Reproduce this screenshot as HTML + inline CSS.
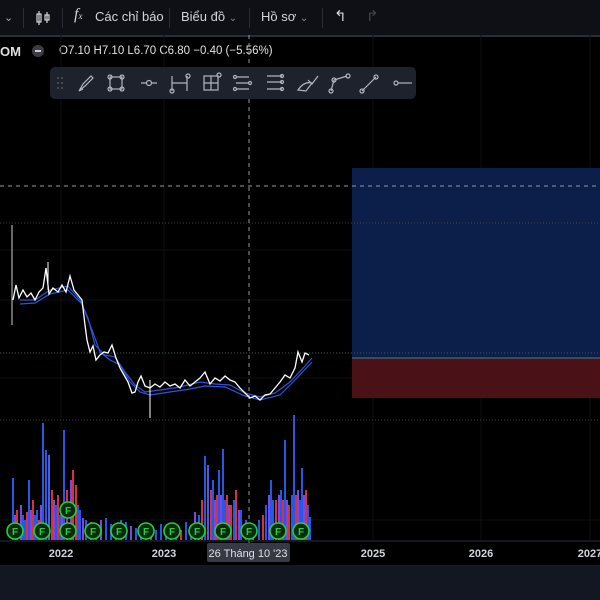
<!DOCTYPE html>
<html><head><meta charset="utf-8"><style>
body{margin:0;width:600px;height:600px;background:#000;overflow:hidden;font-family:"Liberation Sans","Noto Sans CJK SC",sans-serif;position:relative}
.top{position:absolute;left:0;top:0;width:600px;height:35px;background:#0f1016;border-bottom:2px solid #2a2e39}
.t{position:absolute;top:9px;color:#d1d4dc;font-size:13px}
.sep{position:absolute;top:8px;width:1px;height:20px;background:#2a2e39}
.bot{position:absolute;left:0;top:565px;width:600px;height:35px;background:#131722}
</style></head><body>
<div class="top">
<div class="t" style="left:4px;color:#aaa;font-size:11px;top:11px">⌄</div>
<div class="sep" style="left:23px"></div>
<svg style="position:absolute;left:34px;top:9px" width="18" height="18" viewBox="0 0 18 18" fill="none" stroke="#d1d4dc" stroke-width="1.2"><rect x="3" y="5" width="4" height="8"/><line x1="5" y1="2" x2="5" y2="16"/><rect x="11" y="6" width="4" height="5"/><line x1="13" y1="3" x2="13" y2="14"/></svg>
<div class="sep" style="left:62px"></div>
<div class="t" style="left:74px;font-style:italic;font-family:'Liberation Serif',serif;font-size:16px;top:6px">f<span style="font-size:9px">x</span></div>
<div class="t" style="left:95px">Các chỉ báo</div>
<div class="sep" style="left:169px"></div>
<div class="t" style="left:181px">Biểu đồ <span style="color:#888;font-size:10px">⌄</span></div>
<div class="sep" style="left:249px"></div>
<div class="t" style="left:261px">Hồ sơ <span style="color:#888;font-size:10px">⌄</span></div>
<div class="sep" style="left:322px"></div>
<div class="t" style="left:334px;font-size:15px;top:7px">↰</div>
<div class="t" style="left:366px;color:#444;font-size:15px;top:7px">↱</div>
</div>
<div style="position:absolute;left:0;top:44px;color:#e0e0e0;font-size:13px;font-weight:bold">OM</div>
<div style="position:absolute;left:32px;top:45px;width:12px;height:12px;border-radius:50%;background:#3a3d45"><div style="margin:5px 3px;width:6px;height:2px;background:#ccc"></div></div>
<div style="position:absolute;left:59px;top:45px;color:#e0e0e0;font-size:11.5px">O7.10 H7.10 L6.70 C6.80 −0.40 (−5.56%)</div>
<svg width="600" height="600" style="position:absolute;left:0;top:0">
<g stroke="#0e1015" stroke-width="1">
<line x1="61" y1="35" x2="61" y2="540"/><line x1="164" y1="35" x2="164" y2="540"/><line x1="373" y1="35" x2="373" y2="540"/><line x1="481" y1="35" x2="481" y2="540"/><line x1="590" y1="35" x2="590" y2="540"/>
<line x1="0" y1="250" x2="600" y2="250"/><line x1="0" y1="300" x2="600" y2="300"/><line x1="0" y1="378" x2="600" y2="378"/><line x1="0" y1="520" x2="600" y2="520"/>
</g>
<rect x="352" y="168" width="248" height="189" fill="#0c1e4a"/>
<rect x="352" y="359" width="248" height="39" fill="#4a1217"/>
<line x1="352" y1="358" x2="600" y2="358" stroke="#8a8ea0" stroke-width="1"/>
<line x1="0" y1="353" x2="600" y2="353" stroke="#1f6b4f" stroke-dasharray="1 2"/>
<line x1="0" y1="223" x2="600" y2="223" stroke="#444" stroke-dasharray="1 2"/>
<line x1="0" y1="420" x2="600" y2="420" stroke="#444" stroke-dasharray="1 2"/>
<line x1="0" y1="186" x2="600" y2="186" stroke="#9598a1" stroke-dasharray="4 4"/>
<line x1="249" y1="35" x2="249" y2="545" stroke="#9598a1" stroke-dasharray="4 4"/>
<g fill="none" stroke="#2f55d4" stroke-width="1.2">
<polyline points="20,300 35,300 50,290 68,286 80,300 88,318 95,345 105,355 115,357 125,372 135,385 145,392 160,390 180,387 200,382 215,384 230,385 245,393 260,397 275,393 290,382 305,366 312,358"/>
<polyline points="20,304 35,303 50,294 68,290 82,304 92,330 100,352 110,360 120,365 130,382 140,392 150,395 170,392 190,389 205,386 225,387 245,396 260,400 280,395 295,380 312,362"/>
</g>
<polyline fill="none" stroke="#fff" stroke-width="1.3" points="13,300 16,285 19,298 23,290 27,297 31,293 35,300 39,292 43,288 46,268 49,294 53,288 58,292 62,285 66,292 70,276 74,290 78,295 82,300 85,325 87,340 90,352 93,346 96,360 100,355 104,352 108,353 112,345 116,358 120,368 124,375 128,382 132,393 135,392 138,382 141,376 145,386 150,388 155,384 160,387 165,382 170,386 175,384 180,388 185,380 190,386 195,382 200,378 205,372 210,384 215,378 220,381 225,376 230,380 235,382 240,388 245,393 250,398 255,396 260,400 265,395 270,394 275,388 280,382 285,375 290,378 295,368 298,352 302,362 305,353 309,355"/>
<line x1="12" y1="225" x2="12" y2="325" stroke="#ccc"/>
<line x1="150" y1="380" x2="150" y2="418" stroke="#fff"/>
<line x1="48" y1="262" x2="48" y2="290" stroke="#fff"/>
<g opacity="0.9">
<rect x="12" y="478" width="2" height="62" fill="#2962ff"/><rect x="14" y="515" width="2" height="25" fill="#8a4dff"/><rect x="16" y="510" width="2" height="30" fill="#f23645"/><rect x="20" y="505" width="2" height="35" fill="#8a4dff"/><rect x="22" y="515" width="2" height="25" fill="#2962ff"/><rect x="24" y="520" width="2" height="20" fill="#2962ff"/><rect x="26" y="512" width="2" height="28" fill="#f23645"/><rect x="28" y="480" width="2" height="60" fill="#2962ff"/><rect x="30" y="510" width="2" height="30" fill="#8a4dff"/><rect x="32" y="500" width="2" height="40" fill="#f23645"/><rect x="34" y="515" width="2" height="25" fill="#2962ff"/><rect x="36" y="510" width="2" height="30" fill="#2962ff"/><rect x="38" y="520" width="2" height="20" fill="#f23645"/>
<rect x="40" y="505" width="2" height="35" fill="#8a4dff"/><rect x="42" y="423" width="2" height="117" fill="#2962ff"/><rect x="45" y="450" width="2" height="90" fill="#2962ff"/><rect x="48" y="455" width="2" height="85" fill="#4a6bff"/><rect x="51" y="490" width="2" height="50" fill="#f23645"/><rect x="53" y="500" width="2" height="40" fill="#8a4dff"/><rect x="55" y="505" width="2" height="35" fill="#2962ff"/><rect x="57" y="495" width="2" height="45" fill="#f23645"/><rect x="59" y="515" width="2" height="25" fill="#2962ff"/><rect x="61" y="505" width="2" height="35" fill="#8a4dff"/>
<rect x="63" y="430" width="2" height="110" fill="#2962ff"/><rect x="66" y="490" width="2" height="50" fill="#f23645"/><rect x="70" y="480" width="2" height="60" fill="#8a4dff"/><rect x="72" y="470" width="2" height="70" fill="#f23645"/><rect x="75" y="485" width="2" height="55" fill="#f23645"/><rect x="77" y="505" width="2" height="35" fill="#2962ff"/><rect x="79" y="510" width="2" height="30" fill="#2962ff"/><rect x="82" y="518" width="2" height="22" fill="#8a4dff"/>
<rect x="85" y="520" width="2" height="20" fill="#2962ff"/><rect x="90" y="522" width="2" height="18" fill="#f23645"/><rect x="95" y="525" width="2" height="15" fill="#2962ff"/><rect x="100" y="520" width="2" height="20" fill="#8a4dff"/><rect x="105" y="518" width="2" height="22" fill="#2962ff"/><rect x="110" y="524" width="2" height="16" fill="#2962ff"/><rect x="115" y="528" width="2" height="12" fill="#f23645"/><rect x="120" y="520" width="2" height="20" fill="#2962ff"/><rect x="125" y="522" width="2" height="18" fill="#2962ff"/><rect x="130" y="526" width="2" height="14" fill="#8a4dff"/><rect x="135" y="528" width="2" height="12" fill="#2962ff"/><rect x="140" y="524" width="2" height="16" fill="#2962ff"/><rect x="145" y="525" width="2" height="15" fill="#8a4dff"/><rect x="150" y="526" width="2" height="14" fill="#f23645"/><rect x="155" y="530" width="2" height="10" fill="#2962ff"/><rect x="160" y="524" width="2" height="16" fill="#2962ff"/><rect x="165" y="528" width="2" height="12" fill="#2962ff"/><rect x="170" y="526" width="2" height="14" fill="#8a4dff"/><rect x="175" y="528" width="2" height="12" fill="#2962ff"/><rect x="180" y="530" width="2" height="10" fill="#f23645"/><rect x="185" y="522" width="2" height="18" fill="#2962ff"/><rect x="190" y="525" width="2" height="15" fill="#2962ff"/><rect x="194" y="512" width="2" height="28" fill="#8a4dff"/><rect x="198" y="515" width="2" height="25" fill="#2962ff"/><rect x="201" y="500" width="2" height="40" fill="#f23645"/>
<rect x="204" y="456" width="2" height="84" fill="#2962ff"/><rect x="207" y="465" width="2" height="75" fill="#4a6bff"/><rect x="210" y="490" width="2" height="50" fill="#f23645"/><rect x="212" y="480" width="2" height="60" fill="#2962ff"/><rect x="214" y="500" width="2" height="40" fill="#8a4dff"/><rect x="216" y="495" width="2" height="45" fill="#f23645"/><rect x="218" y="470" width="2" height="70" fill="#2962ff"/><rect x="220" y="495" width="2" height="45" fill="#8a4dff"/><rect x="222" y="449" width="2" height="91" fill="#2962ff"/><rect x="224" y="500" width="2" height="40" fill="#2962ff"/><rect x="226" y="495" width="2" height="45" fill="#f23645"/><rect x="228" y="505" width="2" height="35" fill="#8a4dff"/><rect x="230" y="505" width="2" height="35" fill="#f23645"/><rect x="233" y="500" width="2" height="40" fill="#2962ff"/><rect x="235" y="490" width="2" height="50" fill="#f23645"/><rect x="238" y="510" width="2" height="30" fill="#8a4dff"/><rect x="240" y="510" width="2" height="30" fill="#2962ff"/><rect x="245" y="520" width="2" height="20" fill="#2962ff"/><rect x="252" y="524" width="2" height="16" fill="#8a4dff"/><rect x="258" y="520" width="2" height="20" fill="#2962ff"/><rect x="262" y="515" width="2" height="25" fill="#f23645"/>
<rect x="265" y="505" width="2" height="35" fill="#2962ff"/><rect x="268" y="495" width="2" height="45" fill="#8a4dff"/><rect x="270" y="480" width="2" height="60" fill="#2962ff"/><rect x="272" y="500" width="2" height="40" fill="#2962ff"/><rect x="275" y="500" width="2" height="40" fill="#f23645"/><rect x="278" y="495" width="2" height="45" fill="#8a4dff"/><rect x="280" y="490" width="2" height="50" fill="#2962ff"/><rect x="282" y="500" width="2" height="40" fill="#f23645"/><rect x="284" y="440" width="2" height="100" fill="#2962ff"/><rect x="286" y="500" width="2" height="40" fill="#8a4dff"/><rect x="288" y="505" width="2" height="35" fill="#f23645"/><rect x="291" y="495" width="2" height="45" fill="#2962ff"/><rect x="293" y="415" width="2" height="125" fill="#2962ff"/><rect x="295" y="495" width="2" height="45" fill="#f23645"/><rect x="297" y="490" width="2" height="50" fill="#8a4dff"/><rect x="299" y="500" width="2" height="40" fill="#2962ff"/><rect x="301" y="468" width="2" height="72" fill="#2962ff"/><rect x="303" y="495" width="2" height="45" fill="#8a4dff"/><rect x="305" y="490" width="2" height="50" fill="#f23645"/><rect x="307" y="505" width="2" height="35" fill="#2962ff"/><rect x="309" y="517" width="2" height="23" fill="#2962ff"/>
</g>
<line x1="0" y1="541" x2="600" y2="541" stroke="#2a2e39"/>
</svg>
<svg width="600" height="600" style="position:absolute;left:0;top:0" font-family="Liberation Sans,sans-serif" font-size="10" font-weight="bold" text-anchor="middle">
<g fill="#0a2a10" stroke="#1fd23a" stroke-width="1.6">
<circle cx="15" cy="531" r="8"/><circle cx="42" cy="531" r="8"/><circle cx="68" cy="531" r="8"/><circle cx="68" cy="510" r="8"/><circle cx="93" cy="531" r="8"/><circle cx="119" cy="531" r="8"/><circle cx="146" cy="531" r="8"/><circle cx="172" cy="531" r="8"/><circle cx="197" cy="531" r="8"/><circle cx="223" cy="531" r="8"/><circle cx="249" cy="531" r="8"/><circle cx="278" cy="531" r="8"/><circle cx="301" cy="531" r="8"/>
</g>
<g fill="#1fd23a">
<text x="15" y="535">F</text><text x="42" y="535">F</text><text x="68" y="535">F</text><text x="68" y="514">F</text><text x="93" y="535">F</text><text x="119" y="535">F</text><text x="146" y="535">F</text><text x="172" y="535">F</text><text x="197" y="535">F</text><text x="223" y="535">F</text><text x="249" y="535">F</text><text x="278" y="535">F</text><text x="301" y="535">F</text>
</g>
<g fill="#d1d4dc" font-size="11">
<text x="61" y="557">2022</text><text x="164" y="557">2023</text><text x="373" y="557">2025</text><text x="481" y="557">2026</text><text x="590" y="557">2027</text>
</g>
<rect x="207" y="543" width="83" height="19" rx="2" fill="#363a45"/>
<text x="248" y="557" fill="#e0e0e0" font-size="11" font-weight="normal">26 Tháng 10 '23</text>
</svg>
<div style="position:absolute;left:50px;top:67px;width:366px;height:32px;background:#1e222d;border-radius:5px"></div>
<svg width="366" height="32" style="position:absolute;left:50px;top:67px" fill="none" stroke="#b2b5be" stroke-width="1.2">
<g fill="#555" stroke="none"><circle cx="8" cy="11" r="1"/><circle cx="12" cy="11" r="1"/><circle cx="8" cy="16" r="1"/><circle cx="12" cy="16" r="1"/><circle cx="8" cy="21" r="1"/><circle cx="12" cy="21" r="1"/></g>
<path d="M29 24 L33 17 L41 9 L43 11 L35 19 Z M29 24 L33 22"/>
<rect x="60" y="10" width="12" height="12"/><circle cx="60" cy="10" r="2"/><circle cx="72" cy="10" r="2"/><circle cx="60" cy="22" r="2"/><circle cx="72" cy="22" r="2"/>
<path d="M91 16 H96 M102 16 H107"/><circle cx="99" cy="16" r="2.5"/>
<path d="M122 9 V24 M122 16 H137 M137 9 V24"/><circle cx="138" cy="9" r="2"/><circle cx="122" cy="24" r="2"/>
<rect x="154" y="9" width="14" height="14"/><path d="M161 9 V23 M154 16 H168"/><circle cx="169" cy="8" r="2"/>
<path d="M186 10 H199 M186 16 H199 M186 22 H199"/><circle cx="185" cy="10" r="1.5"/><circle cx="200" cy="16" r="1.5"/><circle cx="185" cy="22" r="1.5"/>
<path d="M217 9 H232 M217 15 H232 M217 22 H232"/><circle cx="232" cy="9" r="1.5"/><circle cx="232" cy="15" r="1.5"/><circle cx="232" cy="22" r="1.5"/>
<path d="M248 23 Q254 14 262 16 L256 24 Z M258 13 L262 17 L268 9"/>
<path d="M281 24 L284 13 L297 9"/><circle cx="281" cy="24" r="2"/><circle cx="284" cy="13" r="2"/><circle cx="298" cy="9" r="2"/>
<path d="M312 24 L326 10"/><circle cx="312" cy="24" r="2"/><circle cx="326" cy="10" r="2"/>
<path d="M348 16 H362"/><circle cx="346" cy="16" r="2"/>
</svg>
<div class="bot"></div>
</body></html>
